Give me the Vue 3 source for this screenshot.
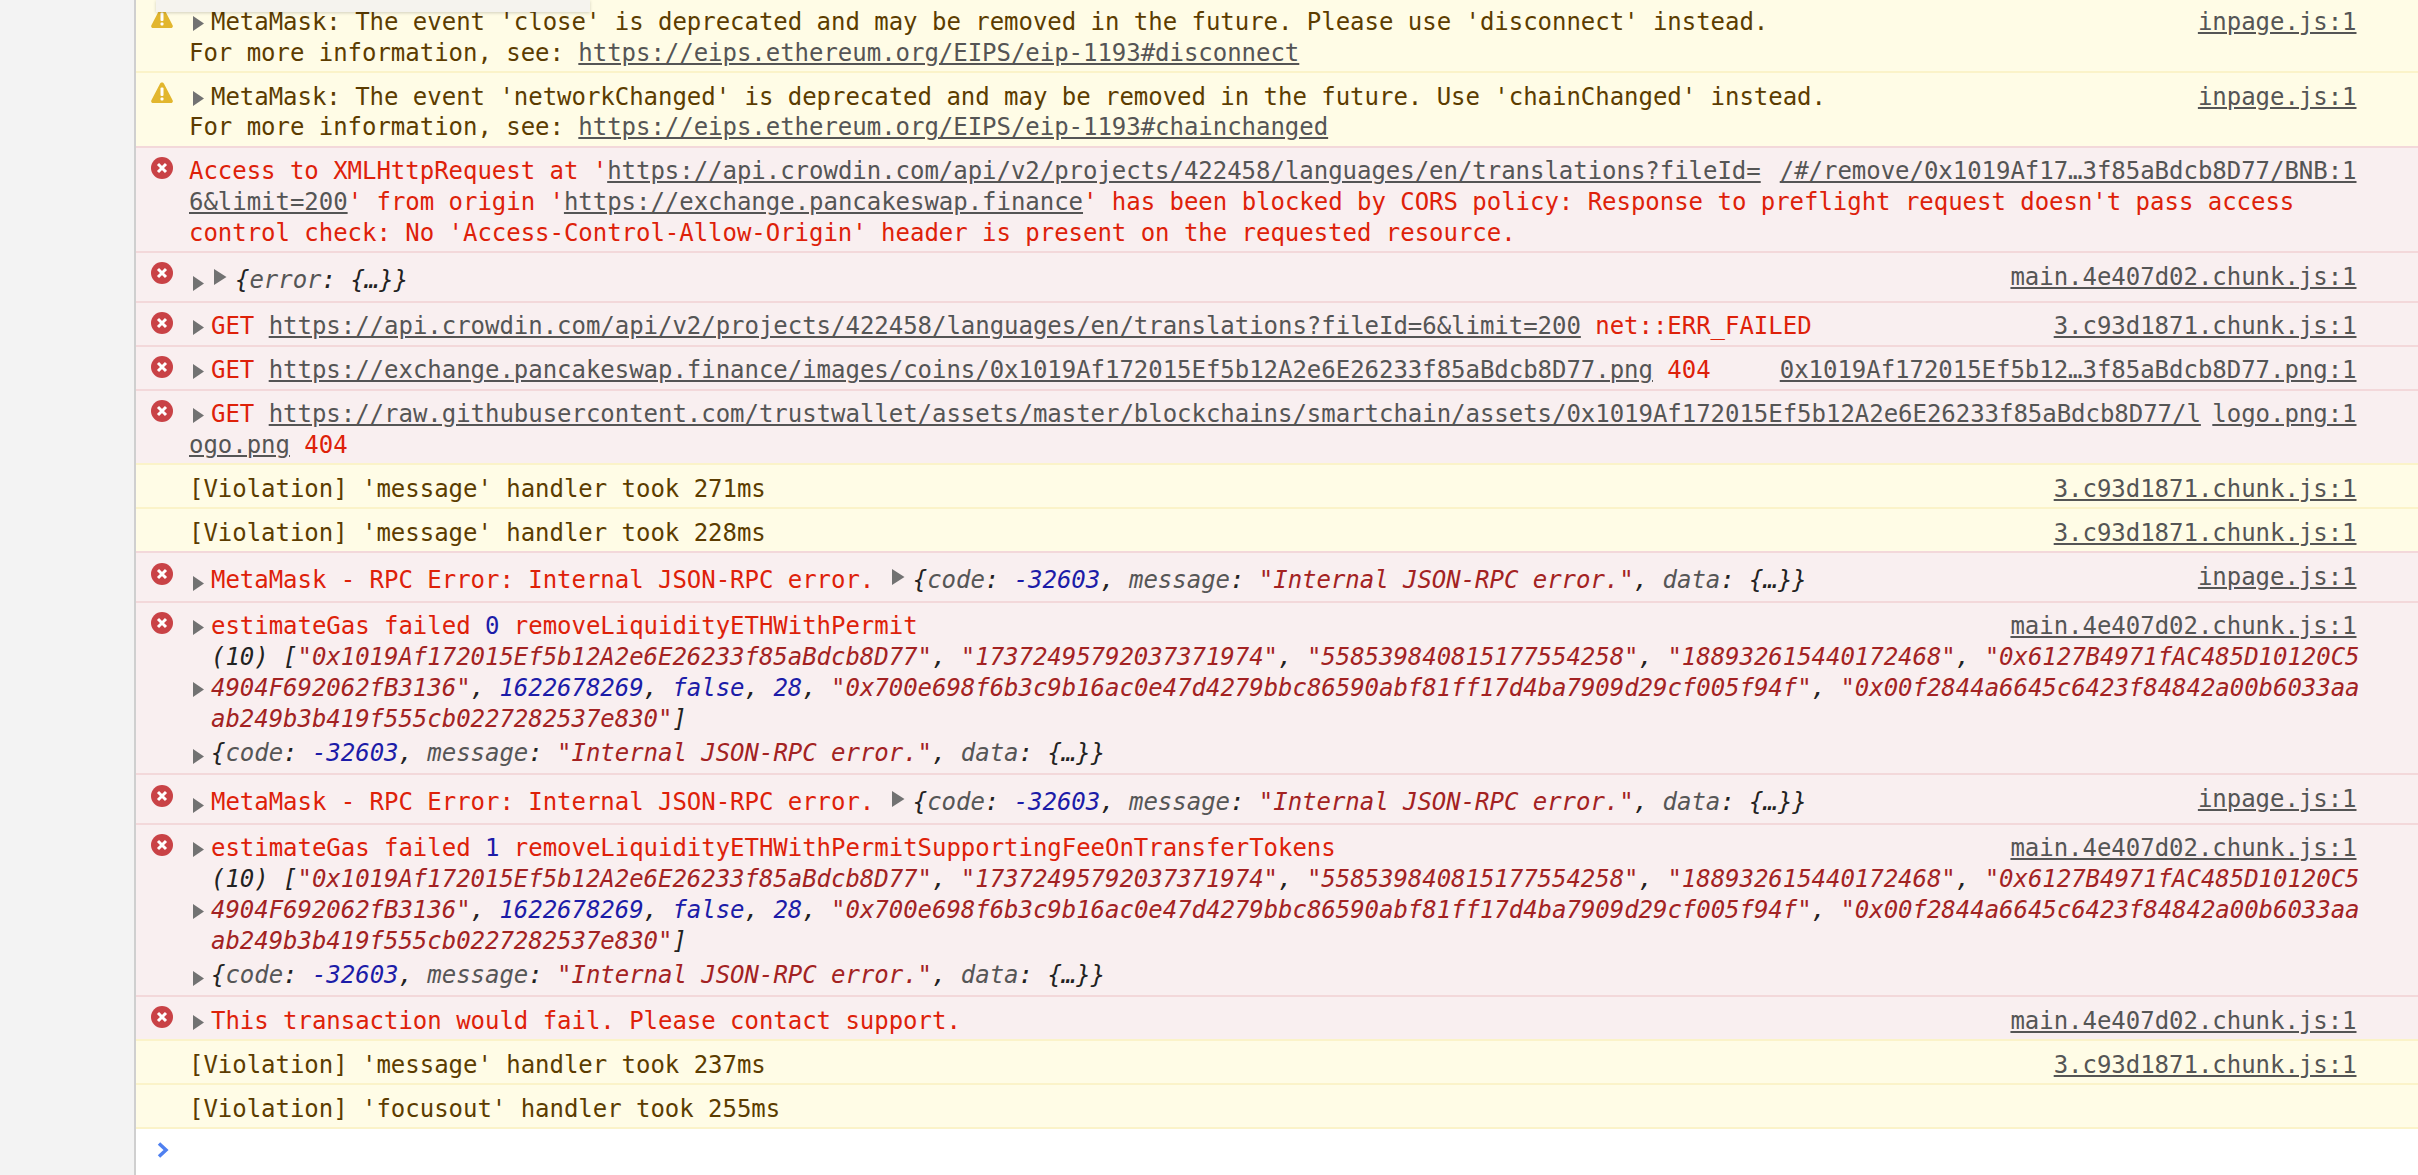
<script setup>
const link = (t) => ({ t, c: 'link' })
const o = (t) => ({ t, c: 'o' })
const k = (t) => ({ t, c: 'k' })
const n = (t) => ({ t, c: 'n' })
const s = (t) => ({ t, c: 's' })
const caret = { caret: true }

const rpcObject = [
  o('{'), k('code'), o(': '), n('-32603'), o(', '), k('message'), o(': '),
  s('"Internal JSON-RPC error."'), o(', '), k('data'), o(': '), o('{…}}')
]

const gasLines = (name, idx) => [
  { arrow: true, segs: [{ t: 'estimateGas failed ' }, { t: idx, c: 'n up' }, { t: ' ' + name }] },
  { indent: true, segs: [
    o('(10) ['), s('"0x1019Af172015Ef5b12A2e6E26233f85aBdcb8D77"'), o(', '),
    s('"17372495792037371974"'), o(', '), s('"558539840815177554258"'), o(', '),
    s('"188932615440172468"'), o(', '), s('"0x6127B4971fAC485D10120C5')
  ] },
  { arrow: true, segs: [
    s('4904F692062fB3136"'), o(', '), n('1622678269'), o(', '), n('false'), o(', '), n('28'), o(', '),
    s('"0x700e698f6b3c9b16ac0e47d4279bbc86590abf81ff17d4ba7909d29cf005f94f"'), o(', '),
    s('"0x00f2844a6645c6423f84842a00b6033aa')
  ] },
  { indent: true, segs: [s('ab249b3b419f555cb0227282537e830"'), o(']')] },
  { arrow: true, tall: true, segs: rpcObject }
]

const rpcRow = {
  kind: 'err', src: 'inpage.js:1',
  lines: [{ arrow: true, tall: true, segs: [{ t: 'MetaMask - RPC Error: Internal JSON-RPC error. ' }, caret, ...rpcObject] }]
}

const violation = (name, ms, src) => ({
  kind: 'vio', src,
  lines: [{ segs: [{ t: `[Violation] '${name}' handler took ${ms}ms` }] }]
})

const rows = [
  {
    kind: 'warn', src: 'inpage.js:1',
    lines: [
      { arrow: true, segs: [{ t: "MetaMask: The event 'close' is deprecated and may be removed in the future. Please use 'disconnect' instead." }] },
      { segs: [{ t: 'For more information, see: ' }, link('https://eips.ethereum.org/EIPS/eip-1193#disconnect')] }
    ]
  },
  {
    kind: 'warn', src: 'inpage.js:1',
    lines: [
      { arrow: true, segs: [{ t: "MetaMask: The event 'networkChanged' is deprecated and may be removed in the future. Use 'chainChanged' instead." }] },
      { segs: [{ t: 'For more information, see: ' }, link('https://eips.ethereum.org/EIPS/eip-1193#chainchanged')] }
    ]
  },
  {
    kind: 'err', src: '/#/remove/0x1019Af17…3f85aBdcb8D77/BNB:1',
    lines: [
      { segs: [{ t: "Access to XMLHttpRequest at '" }, link('https://api.crowdin.com/api/v2/projects/422458/languages/en/translations?fileId=')] },
      { segs: [link('6&limit=200'), { t: "' from origin '" }, link('https://exchange.pancakeswap.finance'), { t: "' has been blocked by CORS policy: Response to preflight request doesn't pass access" }] },
      { segs: [{ t: "control check: No 'Access-Control-Allow-Origin' header is present on the requested resource." }] }
    ]
  },
  {
    kind: 'err', src: 'main.4e407d02.chunk.js:1',
    lines: [{ arrow: true, tall: true, segs: [caret, o('{'), k('error'), o(': '), o('{…}}')] }]
  },
  {
    kind: 'err', src: '3.c93d1871.chunk.js:1',
    lines: [{ arrow: true, segs: [{ t: 'GET ' }, link('https://api.crowdin.com/api/v2/projects/422458/languages/en/translations?fileId=6&limit=200'), { t: ' net::ERR_FAILED' }] }]
  },
  {
    kind: 'err', src: '0x1019Af172015Ef5b12…3f85aBdcb8D77.png:1',
    lines: [{ arrow: true, segs: [{ t: 'GET ' }, link('https://exchange.pancakeswap.finance/images/coins/0x1019Af172015Ef5b12A2e6E26233f85aBdcb8D77.png'), { t: ' 404' }] }]
  },
  {
    kind: 'err', src: 'logo.png:1',
    lines: [
      { arrow: true, segs: [{ t: 'GET ' }, link('https://raw.githubusercontent.com/trustwallet/assets/master/blockchains/smartchain/assets/0x1019Af172015Ef5b12A2e6E26233f85aBdcb8D77/l')] },
      { segs: [link('ogo.png'), { t: ' 404' }] }
    ]
  },
  violation('message', 271, '3.c93d1871.chunk.js:1'),
  violation('message', 228, '3.c93d1871.chunk.js:1'),
  rpcRow,
  { kind: 'err', src: 'main.4e407d02.chunk.js:1', lines: gasLines('removeLiquidityETHWithPermit', '0') },
  rpcRow,
  { kind: 'err', src: 'main.4e407d02.chunk.js:1', lines: gasLines('removeLiquidityETHWithPermitSupportingFeeOnTransferTokens', '1') },
  {
    kind: 'err', src: 'main.4e407d02.chunk.js:1',
    lines: [{ arrow: true, segs: [{ t: 'This transaction would fail. Please contact support.' }] }]
  },
  violation('message', 237, '3.c93d1871.chunk.js:1'),
  { kind: 'vio', src: '', lines: [{ segs: [{ t: "[Violation] 'focusout' handler took 255ms" }] }] }
]
</script>

<template>
  <div class="page">
    <aside class="side"></aside>
    <main class="console">
      <div class="tooltip"></div>
      <div class="list">
        <div v-for="(row, i) in rows" :key="i" class="row" :class="row.kind">
          <div class="icon">
            <svg v-if="row.kind === 'warn'" width="22" height="21" viewBox="0 0 22 21">
              <path d="M11 .5c.9 0 1.600.5 2 1.300l8.600 16.400c.7 1.300-.2 2.800-1.700 2.800H2.100C.6 21-.3 19.500.4 18.200L9 1.800c.4-.8 1.100-1.300 2-1.300z" fill="#e2b62e" />
              <rect x="9.500" y="5.500" width="3" height="8.500" rx="1" fill="#fff" />
              <rect x="9.500" y="15.500" width="3" height="3" rx="1" fill="#fff" />
            </svg>
            <svg v-else-if="row.kind === 'err'" width="22" height="22" viewBox="0 0 22 22">
              <circle cx="11" cy="11" r="11" fill="#c94246" />
              <path d="M7 7l8 8M15 7l-8 8" stroke="#fff" stroke-width="3" />
            </svg>
          </div>
          <div class="msg">
            <a v-if="row.src" class="src">{{ row.src }}</a>
            <div v-for="(line, j) in row.lines" :key="j" class="line" :class="{ tall: line.tall }">
              <span v-if="line.arrow" class="lead">
                <svg width="11" height="15" viewBox="0 0 11 15" class="tri" :class="{ low: line.tall }"><path d="M0 0l11 7.500L0 15z" fill="#727272" /></svg>
              </span>
              <span v-else-if="line.indent" class="lead"></span>
              <template v-for="(seg, m) in line.segs" :key="m">
                <span v-if="seg.caret" class="obj-caret">
                  <svg width="13" height="16" viewBox="0 0 13 16"><path d="M0 0l12.500 8L0 16z" fill="#727272" /></svg>
                </span>
                <span v-else :class="seg.c">{{ seg.t }}</span>
              </template>
            </div>
          </div>
        </div>
      </div>
      <div class="prompt">
        <svg width="12" height="16" viewBox="0 0 12 16"><path d="M2 1.500L9 8l-7 6.500" fill="none" stroke="#4f80f0" stroke-width="3.500" /></svg>
      </div>
    </main>
  </div>
</template>

<style>
html, body { margin: 0; background: #fff; overflow: hidden; }
</style>

<style scoped>
.page {
  display: flex;
  width: 2418px;
  height: 1175px;
  overflow: hidden;
  font-family: "DejaVu Sans Mono", "Liberation Mono", monospace;
  font-size: 24px;
  letter-spacing: -0.03px;
}
.side {
  width: 134px;
  flex: none;
  background: #f3f3f3;
  border-right: 2px solid #cfcfcf;
}
.console {
  flex: 1;
  position: relative;
  min-width: 0;
  background: #fff;
}
.tooltip {
  position: absolute;
  z-index: 2;
  left: 20px;
  top: 0;
  width: 434px;
  height: 12px;
  background: #f5f3ee;
  box-shadow: 0 1px 3px rgba(0, 0, 0, 0.18);
}
.list { margin-top: -3.8px; }
.row {
  display: flex;
  box-sizing: border-box;
  padding: 8.6px 61.5px 2.6px 15px;
  border-top: 2px solid;
}
.warn, .vio {
  background: #fffce6;
  border-top-color: #fbf3c9;
  color: #5c3c00;
}
.err {
  background: #f9eff0;
  border-top-color: #f3d8da;
  color: #de2109;
}
.vio:last-child { border-bottom: 2px solid #fbf3c9; }
.icon {
  width: 38px;
  flex: none;
  height: 22px;
  margin-top: 0.5px;
}
.icon svg { display: block; }
.msg { flex: 1; min-width: 0; }
.line {
  line-height: 30.8px;
  white-space: pre;
}
.line.tall {
  line-height: 35.2px;
  padding-top: 1px;
}
.src {
  float: right;
  line-height: 30.8px;
  color: #555;
  text-decoration: underline;
}
.lead {
  display: inline-block;
  width: 22px;
  height: 15px;
  position: relative;
}
.tri {
  position: absolute;
  left: 4px;
  top: 1px;
}
.tri.low { top: 3px; }
.obj-caret {
  display: inline-block;
  width: 24px;
  position: relative;
  height: 16px;
}
.obj-caret svg {
  position: absolute;
  left: 3px;
  top: -3px;
}
.link { color: #555; text-decoration: underline; }
.o { color: #222; font-style: italic; }
.k { color: #565656; font-style: italic; }
.n { color: #1c1ca8; font-style: italic; }
.n.up { font-style: normal; }
.s { color: #a32222; font-style: italic; }
.prompt {
  padding: 13px 0 0 21px;
}
.prompt svg { display: block; }
</style>
